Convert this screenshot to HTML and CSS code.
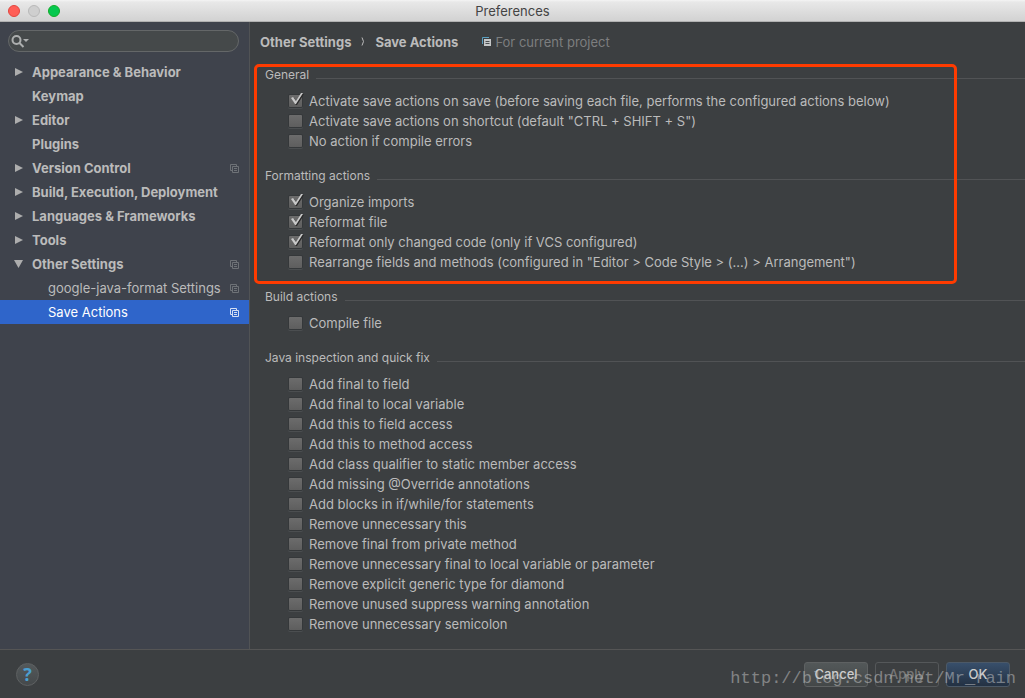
FILE: index.html
```
<!DOCTYPE html>
<html lang="en">
<head>
  <meta charset="utf-8">
  <title>Preferences</title>
  <link rel="stylesheet" href="styles.css">
</head>
<body>
  <svg class="symbols" aria-hidden="true">
    <symbol id="copy" viewBox="0 0 9 9">
      <path d="M2.5 6.5h-2v-6h6v2M2.5 2.5h6v6h-6zM4 4.5h3M4 6.5h3" fill="none" stroke="currentColor"/>
    </symbol>
  </svg>

  <header class="titlebar">
    <div class="lights">
      <span class="light close"></span>
      <span class="light minimize"></span>
      <span class="light zoom"></span>
    </div>
    <h1>Preferences</h1>
  </header>

  <div class="main">
    <aside class="sidebar">
      <div class="search">
        <svg width="20" height="14" viewBox="0 0 20 14" aria-hidden="true">
          <circle cx="5.5" cy="6" r="4" fill="none" stroke="#adafaf" stroke-width="2"/>
          <path d="M8.5 9l4 4" stroke="#adafaf" stroke-width="2"/>
          <path d="M12 5h6l-3 3z" fill="#adafaf"/>
        </svg>
        <input type="text" aria-label="Search settings">
      </div>
      <ul class="tree">
        <li><a href="#" class="closed">Appearance &amp; Behavior</a></li>
        <li><a href="#">Keymap</a></li>
        <li><a href="#" class="closed">Editor</a></li>
        <li><a href="#">Plugins</a></li>
        <li><a href="#" class="closed">Version Control<svg class="copy"><use href="#copy"/></svg></a></li>
        <li><a href="#" class="closed">Build, Execution, Deployment</a></li>
        <li><a href="#" class="closed">Languages &amp; Frameworks</a></li>
        <li><a href="#" class="closed">Tools</a></li>
        <li><a href="#" class="open">Other Settings<svg class="copy"><use href="#copy"/></svg></a></li>
        <li><a href="#" class="child">google-java-format Settings<svg class="copy"><use href="#copy"/></svg></a></li>
        <li><a href="#" class="child selected">Save Actions<svg class="copy"><use href="#copy"/></svg></a></li>
      </ul>
    </aside>

    <main class="content">
      <div class="crumbs">
        <span>Other Settings</span>
        <svg width="4" height="9" viewBox="0 0 4 9" aria-hidden="true"><path d="M1 0.5q3 4 0 8" fill="none" stroke="#bbb"/></svg>
        <span>Save Actions</span>
        <span class="scope">
          <svg width="9" height="9" viewBox="0 0 9 9" aria-hidden="true">
            <path d="M0.5 7V0.5H7" fill="none" stroke="#5a9fc0"/>
            <path d="M2 2h7v7H2z" fill="#c4c6c7"/>
            <path d="M3.5 4.5h4M3.5 6.5h4" stroke="#4a4e50"/>
          </svg>
          For current project
        </span>
      </div>

      <div class="groups">
        <div class="highlight">
          <section class="group">
            <h2>General</h2>
            <label><input type="checkbox" checked>Activate save actions on save (before saving each file, performs the configured actions below)</label>
            <label><input type="checkbox">Activate save actions on shortcut (default "CTRL + SHIFT + S")</label>
            <label><input type="checkbox">No action if compile errors</label>
          </section>
          <section class="group">
            <h2>Formatting actions</h2>
            <label><input type="checkbox" checked>Organize imports</label>
            <label><input type="checkbox" checked>Reformat file</label>
            <label><input type="checkbox" checked>Reformat only changed code (only if VCS configured)</label>
            <label><input type="checkbox">Rearrange fields and methods (configured in "Editor &gt; Code Style &gt; (...) &gt; Arrangement")</label>
          </section>
        </div>
        <section class="group">
          <h2>Build actions</h2>
          <label><input type="checkbox">Compile file</label>
        </section>
        <section class="group">
          <h2>Java inspection and quick fix</h2>
          <label><input type="checkbox">Add final to field</label>
          <label><input type="checkbox">Add final to local variable</label>
          <label><input type="checkbox">Add this to field access</label>
          <label><input type="checkbox">Add this to method access</label>
          <label><input type="checkbox">Add class qualifier to static member access</label>
          <label><input type="checkbox">Add missing @Override annotations</label>
          <label><input type="checkbox">Add blocks in if/while/for statements</label>
          <label><input type="checkbox">Remove unnecessary this</label>
          <label><input type="checkbox">Remove final from private method</label>
          <label><input type="checkbox">Remove unnecessary final to local variable or parameter</label>
          <label><input type="checkbox">Remove explicit generic type for diamond</label>
          <label><input type="checkbox">Remove unused suppress warning annotation</label>
          <label><input type="checkbox">Remove unnecessary semicolon</label>
        </section>
      </div>
    </main>
  </div>

  <footer class="footer">
    <button class="help" aria-label="Help">?</button>
    <div class="buttons">
      <button class="btn">Cancel</button>
      <button class="btn" disabled>Apply</button>
      <button class="btn primary">OK</button>
    </div>
    <span class="watermark">http://blog.csdn.net/Mr_rain</span>
  </footer>
</body>
</html>
```

FILE: styles.css
```
* {
  box-sizing: border-box;
}

body {
  margin: 0;
  min-height: 100vh;
  display: flex;
  flex-direction: column;
  background-color: #3c3f41;
  color: #bbbbbb;
  font-family: Inter, "Liberation Sans", sans-serif;
  font-size: 13px;
}

.symbols {
  display: none;
}

.titlebar {
  display: grid;
  grid-template-columns: 1fr auto 1fr;
  align-items: center;
  height: 22px;
  padding: 0 8px;
  background: linear-gradient(#f4f4f4, #e8e8e8 10%, #d2d2d2);
  border-bottom: 1px solid #b1b1b1;
}

.titlebar h1 {
  margin: 0;
  color: #444444;
  font-size: 13px;
  font-weight: normal;
}

.lights {
  display: flex;
  gap: 8px;
}

.light {
  width: 12px;
  height: 12px;
  border: 1px solid #e2463f;
  border-radius: 50%;
  background-color: #ff5f57;
}

.minimize {
  border-color: #b9b9b9;
  background-color: #cfcfcf;
}

.zoom {
  border-color: #12ac28;
  background-color: #05c84f;
}

.main {
  flex: 1;
  display: flex;
}

.sidebar {
  width: 250px;
  background-color: #3f434c;
  border-right: 1px solid #515355;
}

.search {
  display: flex;
  align-items: center;
  height: 22px;
  margin: 8px 10px 8px 8px;
  padding: 0 8px 0 2px;
  background-color: #45494a;
  border: 1px solid #646768;
  border-radius: 11px;
}

.search input {
  flex: 1;
  min-width: 0;
  border: none;
  outline: none;
  background: none;
  color: #bbbbbb;
  font: inherit;
}

.tree {
  margin: 0;
  padding: 0;
  list-style: none;
}

.tree a {
  display: flex;
  align-items: center;
  height: 24px;
  padding: 0 10px 0 14px;
  color: #bbbbbb;
  font-weight: bold;
  text-decoration: none;
  white-space: nowrap;
}

.tree a::before {
  content: "";
  width: 9px;
  height: 8px;
  margin-right: 9px;
}

.tree .closed::before {
  background-color: #adadad;
  clip-path: polygon(1px 0, 100% 50%, 1px 100%);
}

.tree .open::before {
  background-color: #adadad;
  clip-path: polygon(0 0, 100% 0, 50% 100%);
}

.tree .child {
  padding-left: 30px;
  font-weight: normal;
}

.tree .selected {
  background-color: #2f65ca;
  color: #ffffff;
}

.copy {
  width: 9px;
  height: 9px;
  margin-left: auto;
  color: #6e7277;
}

.selected .copy {
  color: #d5dff3;
}

.content {
  flex: 1;
  min-width: 0;
}

.crumbs {
  display: flex;
  align-items: center;
  gap: 10px;
  height: 39px;
  padding-left: 10px;
  font-weight: bold;
}

.scope {
  display: flex;
  align-items: center;
  gap: 4px;
  margin-left: 14px;
  color: #7c7e7f;
  font-weight: normal;
}

.groups {
  padding: 4px 0 15px 15px;
}

.highlight {
  position: relative;
  margin-bottom: 15px;
}

/* red frame, runs over the group separators */
.highlight::after {
  content: "";
  position: absolute;
  top: -1px;
  right: 68px;
  bottom: -12px;
  left: -11px;
  border: 3px solid #ff3b00;
  border-radius: 5px;
  pointer-events: none;
}

.group + .group {
  margin-top: 15px;
}

.group h2 {
  display: flex;
  align-items: center;
  gap: 7px;
  height: 18px;
  margin: 0 0 8px;
  font-size: 12px;
  font-weight: normal;
}

.group h2::after {
  content: "";
  flex: 1;
  height: 1px;
  margin-top: 8px;
  background-color: #515355;
}

.group label {
  display: flex;
  align-items: center;
  gap: 7px;
  height: 20px;
  padding-left: 24px;
}

.group input {
  position: relative;
  width: 13px;
  height: 12px;
  margin: 0;
  appearance: none;
  background: linear-gradient(#6c6c6c, #5e5e5e);
  border-radius: 1px;
  box-shadow: 0 0 0 1px #35383a, 0 1px 0 1px #4b4e50;
}

/* the tick sticks out of the box at the top right */
.group input:checked::before,
.group input:checked::after {
  content: "";
  position: absolute;
  top: -2px;
  left: 2px;
  width: 12px;
  height: 12px;
  background-color: #c8c8c8;
  clip-path: polygon(0 5px, 2px 4px, 5px 8px, 10px 0, 12px 0, 5px 11px, 4px 11px);
}

.group input:checked::before {
  top: -1px;
  left: 3px;
  background-color: #2b2b2b;
}

.footer {
  position: relative;
  display: flex;
  align-items: center;
  justify-content: space-between;
  height: 49px;
  padding: 0 15px 0 16px;
  border-top: 1px solid #555555;
}

.help {
  width: 23px;
  height: 23px;
  padding: 0;
  background: linear-gradient(#53585a, #45494b);
  border: 1px solid #5e6162;
  border-radius: 50%;
  color: #4a9fd0;
  font: bold 18px/20px "Open Sans", sans-serif;
}

.buttons {
  display: flex;
  gap: 7px;
}

.btn {
  width: 64px;
  height: 25px;
  padding: 0;
  background: linear-gradient(#535859, #434748);
  border: 1px solid #5e6162;
  border-radius: 3px;
  color: #cccccc;
  font: 500 13px Inter, sans-serif;
}

.btn:disabled {
  background: none;
  border-color: #55585a;
  color: #777777;
}

.primary {
  background: linear-gradient(#384f6b, #233143);
  border-color: #4c5967;
}

.watermark {
  position: absolute;
  right: 9px;
  bottom: 9px;
  color: rgba(200, 200, 200, 0.5);
  font: 17px/20px "Liberation Mono", monospace;
  pointer-events: none;
}
```
